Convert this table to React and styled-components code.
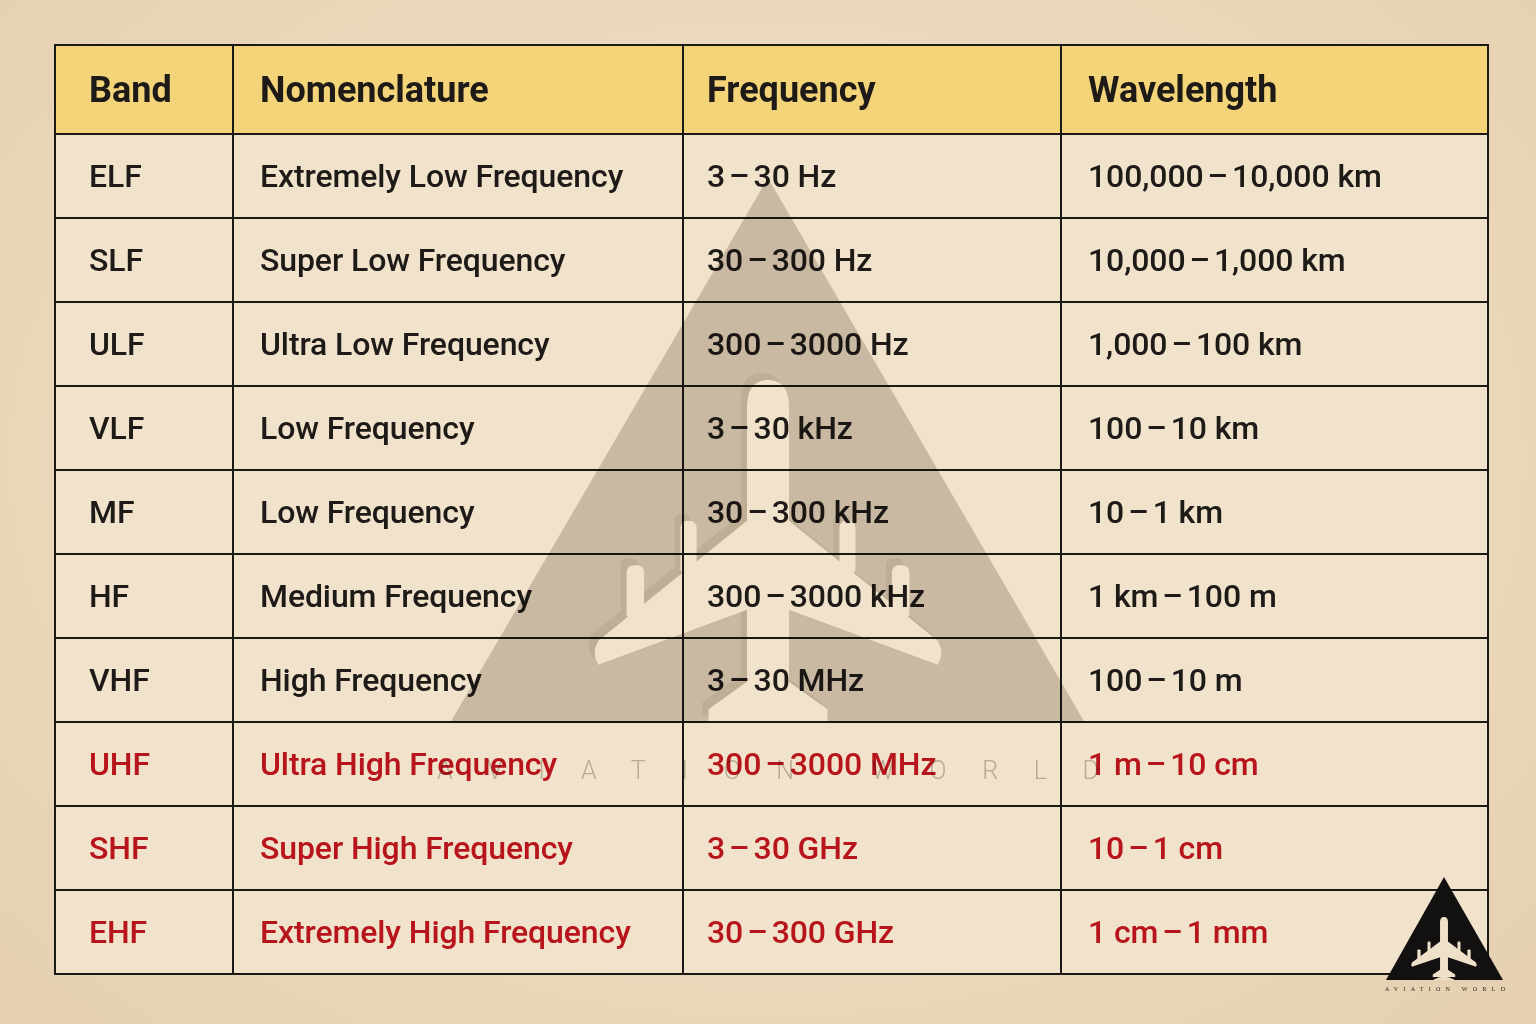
import React from "react";
import styled, { createGlobalStyle } from "styled-components";

const GlobalStyle = createGlobalStyle`
   html, body {
      margin: 0;
      padding: 0;
   }
   body {
      background: radial-gradient(ellipse at 50% 45%, #f0e0c8 0%, #ecd9bd 55%, #e5cfb0 100%);
      font-family: Roboto, "Liberation Sans", sans-serif;
   }
`;

const columns = [178, 450, 378, 427];

const rows = [
   { band: "ELF", name: "Extremely Low Frequency", freq: ["3", "30 Hz"], wave: ["100,000", "10,000 km"] },
   { band: "SLF", name: "Super Low Frequency", freq: ["30", "300 Hz"], wave: ["10,000", "1,000 km"] },
   { band: "ULF", name: "Ultra Low Frequency", freq: ["300", "3000 Hz"], wave: ["1,000", "100 km"] },
   { band: "VLF", name: "Low Frequency", freq: ["3", "30 kHz"], wave: ["100", "10 km"] },
   { band: "MF", name: "Low Frequency", freq: ["30", "300 kHz"], wave: ["10", "1 km"] },
   { band: "HF", name: "Medium Frequency", freq: ["300", "3000 kHz"], wave: ["1 km", "100 m"] },
   { band: "VHF", name: "High Frequency", freq: ["3", "30 MHz"], wave: ["100", "10 m"] },
   { band: "UHF", name: "Ultra High Frequency", freq: ["300", "3000 MHz"], wave: ["1 m", "10 cm"], hot: true },
   { band: "SHF", name: "Super High Frequency", freq: ["3", "30 GHz"], wave: ["10", "1 cm"], hot: true },
   { band: "EHF", name: "Extremely High Frequency", freq: ["30", "300 GHz"], wave: ["1 cm", "1 mm"], hot: true },
];

const S = {
   Page: styled.div`
      width: 1536px;
      height: 1024px;
      padding: 44px 49px 0 54px;
      box-sizing: border-box;
      position: relative;
   `,
   TableWrap: styled.div`
      position: relative;
      width: 1433px;
   `,
   Table: styled.table`
      width: 1433px;
      table-layout: fixed;
      border-collapse: collapse;
      border: 2px solid #1b1917;
      color: #1d1a17;
      th, td {
         border: 2px solid #1b1917;
         text-align: left;
         white-space: nowrap;
         padding: 0 0 0 26px;
      }
      th:nth-child(1), td:nth-child(1) {
         padding-left: 33px;
      }
      th:nth-child(3), td:nth-child(3) {
         padding-left: 23px;
      }
   `,
   Col: styled.col`
      width: ${(p) => p.$w}px;
   `,
   HeadRow: styled.tr`
      height: 89px;
      background: #f4d479;
      th {
         font-size: 36px;
         font-weight: 700;
      }
   `,
   Row: styled.tr`
      height: 84px;
      background: #f1e2cb;
      td {
         font-size: 32px;
         font-weight: 500;
         letter-spacing: -0.1px;
         color: ${(p) => (p.$hot ? "#b8141c" : "#1d1a17")};
      }
   `,
   Dash: styled.span`
      margin: 0 4px;
   `,
   Watermark: styled.svg`
      position: absolute;
      left: 376px;
      top: 126px;
      pointer-events: none;
      mix-blend-mode: multiply;
   `,
   Logo: styled.svg`
      position: absolute;
      left: 1381px;
      top: 875px;
   `,
};

// plane silhouette in a 100x100 box, nose up
const PLANE =
   "M44 8 Q44 0 50 0 Q56 0 56 8 L56 41 L98.5 76 Q100.5 79.5 98.5 83 L56 67 L56 88 L67 96 L67 100 L33 100 L33 96 L44 88 L44 67 L1.5 83 Q-0.5 79.5 1.5 76 L44 41 Z";

function Plane({ fill }) {
   return (
      <g fill={fill}>
         <path d={PLANE} />
         <rect x="25" y="41" width="4.6" height="16" rx="2" />
         <rect x="9.6" y="54" width="5" height="16" rx="2" />
         <rect x="70.4" y="41" width="4.6" height="16" rx="2" />
         <rect x="85.4" y="54" width="5" height="16" rx="2" />
      </g>
   );
}

function Range({ parts }) {
   return (
      <>
         {parts[0]}
         <S.Dash>–</S.Dash>
         {parts[1]}
      </>
   );
}

function Watermark() {
   return (
      <S.Watermark width="700" height="620" viewBox="0 0 700 620">
         <polygon points="338,8 20,553 655,553" fill="#d5d1cc" />
         <g transform="translate(157,203) scale(3.5,3.43)">
            <Plane fill="#c9c4bd" />
         </g>
         <g transform="translate(163,210) scale(3.5,3.43)">
            <Plane fill="#ffffff" />
         </g>
         <text
            x="7"
            y="609"
            textLength="662"
            lengthAdjust="spacing"
            fontFamily="Roboto, 'Liberation Sans', sans-serif"
            fontWeight="300"
            fontSize="25"
            fill="#c4c0b9"
         >
            AVIATION WORLD
         </text>
      </S.Watermark>
   );
}

function Logo() {
   return (
      <S.Logo width="128" height="122" viewBox="0 0 128 122">
         <polygon points="63,2 5,105 122,105" fill="#121110" />
         <path d="M52 105 Q63 98 74 105 Z" fill="#eddcc4" />
         <g transform="translate(30,42) scale(0.66,0.6)">
            <Plane fill="#efe0c9" />
         </g>
         <text
            x="4"
            y="116"
            textLength="120"
            lengthAdjust="spacing"
            fontFamily="'Liberation Serif', serif"
            fontSize="6"
            fill="#2a2724"
         >
            AVIATION WORLD
         </text>
      </S.Logo>
   );
}

export default function App() {
   return (
      <>
         <GlobalStyle />
         <S.Page>
            <S.TableWrap>
               <S.Table>
                  <colgroup>
                     {columns.map((w, i) => (
                        <S.Col key={i} $w={w} />
                     ))}
                  </colgroup>
                  <thead>
                     <S.HeadRow>
                        <th>Band</th>
                        <th>Nomenclature</th>
                        <th>Frequency</th>
                        <th>Wavelength</th>
                     </S.HeadRow>
                  </thead>
                  <tbody>
                     {rows.map((r) => (
                        <S.Row key={r.band} $hot={r.hot}>
                           <td>{r.band}</td>
                           <td>{r.name}</td>
                           <td>
                              <Range parts={r.freq} />
                           </td>
                           <td>
                              <Range parts={r.wave} />
                           </td>
                        </S.Row>
                     ))}
                  </tbody>
               </S.Table>
               <Watermark />
            </S.TableWrap>
            <Logo />
         </S.Page>
      </>
   );
}
